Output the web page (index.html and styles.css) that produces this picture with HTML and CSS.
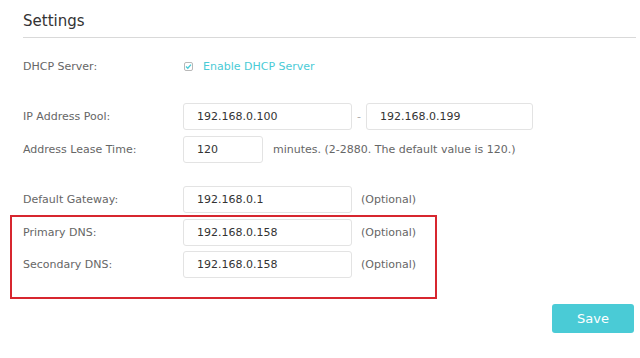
FILE: index.html
```html
<!DOCTYPE html>
<html>
<head>
<meta charset="utf-8">
<link rel="stylesheet" href="styles.css">
</head>
<body>
<div class="page">
  <h2 class="title">Settings</h2>
  <div class="form">
    <div class="row row-dhcp">
      <div class="label">DHCP Server:</div>
      <div class="field">
        <span class="checkbox"><svg width="7" height="7" viewBox="0 0 7 7"><path d="M1 3.6 L2.8 5.3 L6 1.6" fill="none" stroke="#4acbd6" stroke-width="1.4"/></svg></span>
        <span class="check-text">Enable DHCP Server</span>
      </div>
    </div>
    <div class="group group-pool">
      <div class="row">
        <div class="label">IP Address Pool:</div>
        <div class="field">
          <div class="input w169">192.168.0.100</div>
          <span class="dash">-</span>
          <div class="input w167">192.168.0.199</div>
        </div>
      </div>
      <div class="row">
        <div class="label">Address Lease Time:</div>
        <div class="field">
          <div class="input w80">120</div>
          <span class="note note-min">minutes. (2-2880. The default value is 120.)</span>
        </div>
      </div>
    </div>
    <div class="group group-gw">
      <div class="row">
        <div class="label">Default Gateway:</div>
        <div class="field">
          <div class="input w169">192.168.0.1</div>
          <span class="note">(Optional)</span>
        </div>
      </div>
      <div class="row">
        <div class="label">Primary DNS:</div>
        <div class="field">
          <div class="input w169">192.168.0.158</div>
          <span class="note">(Optional)</span>
        </div>
      </div>
      <div class="row">
        <div class="label">Secondary DNS:</div>
        <div class="field">
          <div class="input w169">192.168.0.158</div>
          <span class="note">(Optional)</span>
        </div>
      </div>
    </div>
  </div>
  <div class="actions">
    <button class="save">Save</button>
  </div>
  <div class="highlight"></div>
</div>
</body>
</html>
```

FILE: styles.css
```css
html, body {
  margin: 0;
  padding: 0;
  background: #ffffff;
}
body {
  font-family: "DejaVu Sans", Verdana, sans-serif;
  font-size: 11px;
  color: #666666;
}
.page {
  position: relative;
  width: 640px;
  height: 358px;
  overflow: hidden;
}
.title {
  margin: 0 4px 0 23px;
  padding: 12px 0 6px;
  line-height: 19px;
  font-size: 15px;
  font-weight: normal;
  color: #333333;
  border-bottom: 1px solid #d9d9d9;
}
.form {
  padding-left: 23px;
}
.row {
  display: flex;
  align-items: center;
  height: 27px;
}
.row-dhcp {
  margin-top: 15px;
  height: 27px;
}
.label {
  width: 160px;
  flex: none;
  color: #666666;
}
.field {
  display: flex;
  align-items: center;
}
.checkbox {
  width: 7px;
  height: 7px;
  border: 1px solid #b8b8b8;
  border-radius: 2px;
  display: flex;
  align-items: center;
  justify-content: center;
  margin-left: 1px;
}
.checkbox svg {
  display: block;
}
.check-text {
  margin-left: 10px;
  color: #4acbd6;
}
.group {
  display: flex;
  flex-direction: column;
  gap: 6px;
}
.group-pool {
  margin-top: 23px;
}
.group-gw {
  margin-top: 23px;
  gap: 5.5px;
}
.input {
  box-sizing: border-box;
  height: 27px;
  border: 1px solid #e3e3e3;
  border-radius: 3px;
  padding-left: 13px;
  line-height: 25px;
  color: #333333;
  background: #ffffff;
}
.w169 { width: 169px; }
.w167 { width: 167px; }
.w80 { width: 80px; }
.dash {
  width: 14px;
  text-align: center;
  color: #aaaaaa;
}
.note {
  margin-left: 9px;
  color: #666666;
}
.note-min {
  margin-left: 10px;
}
.actions {
  display: flex;
  justify-content: flex-end;
  padding-right: 6px;
  margin-top: 26px;
}
.save {
  width: 82px;
  height: 29px;
  border: none;
  border-radius: 3px;
  background: #4acbd6;
  color: #ffffff;
  font-family: "DejaVu Sans", Verdana, sans-serif;
  font-size: 13px;
  padding: 0;
}
.highlight {
  position: absolute;
  left: 10px;
  top: 215px;
  width: 427px;
  height: 84px;
  box-sizing: border-box;
  border: 2px solid #d7262f;
}
```
